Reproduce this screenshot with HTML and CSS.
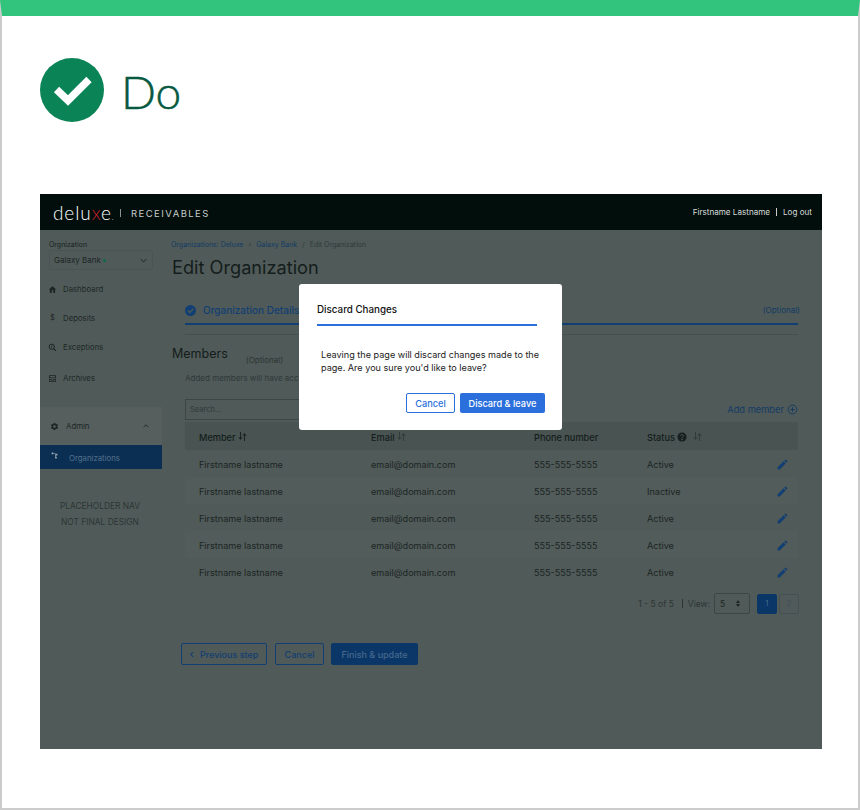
FILE: index.html
```html
<!DOCTYPE html>
<html lang="en">
<head>
<meta charset="utf-8">
<title>Do</title>
<link rel="stylesheet" href="styles.css">
</head>
<body>
<svg class="defs" aria-hidden="true">
  <symbol id="pen" viewBox="0 0 24 24"><path d="M3 17.250V21h3.750L17.800 9.940l-3.750-3.750zM20.700 7.040a1 1 0 000-1.410l-2.340-2.340a1 1 0 00-1.410 0l-1.830 1.830 3.750 3.750z"/></symbol>
  <symbol id="arrows" viewBox="0 0 9 9"><path d="M2.500 0v7M.8 5.200l1.700 2.200 1.700-2.200M6.500 9V2M4.800 3.800l1.700-2.200 1.700 2.200" fill="none" stroke="currentColor" stroke-width=".9"/></symbol>
</svg>
<div class="card">
  <div class="do-row">
    <svg class="do-icon" viewBox="0 0 64 64"><circle cx="32" cy="32" r="32" fill="#0a8457"/><path d="M16.500 31.500 L28 42.500 L49 21.500" fill="none" stroke="#fff" stroke-width="7.500"/></svg>
    <span class="do-text">Do</span>
  </div>
  <div class="app">
    <header class="topbar">
      <div class="brand"><span class="logo">delu<span class="logo-x">x</span>e<span class="logo-dot">.</span></span><span class="brand-sep"></span><span class="product">RECEIVABLES</span></div>
      <div class="user"><span>Firstname Lastname</span><span class="user-sep"></span><span>Log out</span></div>
    </header>
    <div class="body">
      <aside class="side">
        <div class="org">
          <div class="org-label">Orgnization</div>
          <div class="org-select"><span>Galaxy Bank <i class="dot"></i></span>
            <svg class="chev" viewBox="0 0 10 6"><path d="M1 1l4 4 4-4" fill="none" stroke="#1c2524" stroke-width="1.400"/></svg></div>
        </div>
        <nav class="nav">
          <a class="nav-item nav-dash"><svg class="nav-ico" viewBox="0 0 24 24"><path d="M10 21v-7h4v7h5v-9h3L12 3 2 12h3v9z"/></svg>Dashboard</a>
          <a class="nav-item nav-dep"><span class="nav-ico nav-dollar">$</span>Deposits</a>
          <a class="nav-item nav-exc"><svg class="nav-ico" viewBox="0 0 24 24"><circle cx="10" cy="10" r="7" fill="none" stroke="#1c2524" stroke-width="2.600"/><path d="M15 15l6 6" stroke="#1c2524" stroke-width="3"/><path d="M9 6h2v5H9zM9 12h2v2H9z"/></svg>Exceptions</a>
          <a class="nav-item nav-arc"><svg class="nav-ico" viewBox="0 0 24 24"><path d="M3 3h18v8H3zM5.500 5v4h13V5zM3 13h6l1 2h4l1-2h6v8H3zM5 15v4h14v-4h-2.500l-1 2h-7l-1-2z" fill-rule="evenodd"/></svg>Archives</a>
        </nav>
        <div class="admin">
          <svg class="nav-ico" viewBox="0 0 24 24"><path d="M19.140 12.940c.04-.3.06-.61.06-.94 0-.32-.02-.64-.07-.94l2.030-1.580c.18-.14.23-.41.12-.61l-1.920-3.320c-.12-.22-.37-.29-.59-.22l-2.390.96c-.5-.38-1.030-.7-1.620-.94l-.36-2.540c-.04-.24-.24-.41-.48-.41h-3.840c-.24 0-.43.17-.47.41l-.36 2.540c-.59.24-1.130.57-1.620.94l-2.390-.96c-.22-.08-.47 0-.59.22L2.740 8.870c-.12.21-.08.47.12.61l2.030 1.580c-.05.3-.09.63-.09.94s.02.64.07.94l-2.030 1.580c-.18.14-.23.41-.12.61l1.920 3.320c.12.22.37.29.59.22l2.390-.96c.5.38 1.030.7 1.620.94l.36 2.540c.05.24.24.41.48.41h3.840c.24 0 .44-.17.47-.41l.36-2.540c.59-.24 1.130-.56 1.620-.94l2.390.96c.22.08.47 0 .59-.22l1.920-3.320c.12-.22.07-.47-.12-.61l-2.010-1.580zM12 15.600c-1.980 0-3.600-1.620-3.600-3.600s1.620-3.600 3.600-3.600 3.600 1.620 3.600 3.600-1.620 3.600-3.600 3.600z"/></svg>
          <span class="admin-label">Admin</span>
          <svg class="chev-up" viewBox="0 0 10 6"><path d="M1 5l4-4 4 4" fill="none" stroke="#1c2524" stroke-width="1.400"/></svg>
        </div>
        <a class="sub-active"><svg class="sub-ico" viewBox="0 0 12 12"><path d="M1 1h3v3H1zM8 3h3v3H8zM7 8h3v3H7zM4 2h4v1H4zM7 4h1v5H7z"/></svg>Organizations</a>
        <div class="placeholder">PLACEHOLDER NAV<br>NOT FINAL DESIGN</div>
      </aside>
      <main class="main">
        <div class="crumbs"><span class="crumb-link">Organizations: Deluxe</span><span class="crumb-sep">›</span><span class="crumb-link">Galaxy Bank</span><span class="crumb-sep">/</span><span>Edit Organization</span></div>
        <h1 class="title">Edit Organization</h1>
        <div class="content">
          <div class="tabs">
            <svg class="tab-ico" viewBox="0 0 12 12"><circle cx="6" cy="6" r="6" fill="#123f73"/><path d="M3 6l2.200 2.200L9 4.200" fill="none" stroke="#505a58" stroke-width="1.400"/></svg>
            <span class="tab-name">Organization Details</span>
            <span class="tab-opt">(Optional)</span>
          </div>
          <div class="tab-rule"></div>
        </div>
        <div class="members-head"><h2 class="members">Members</h2><span class="opt">(Optional)</span></div>
        <div class="content">
          <p class="hint">Added members will have access to this organization.</p>
          <div class="tools">
            <div class="search">Search...</div>
            <a class="add">Add member <svg class="add-ico" viewBox="0 0 12 12"><circle cx="6" cy="6" r="4.800" fill="none" stroke="#123a66"/><path d="M3.500 6h5M6 3.500v5" stroke="#123a66"/></svg></a>
          </div>
          <div class="table">
            <div class="row thead">
              <span>Member <svg class="sort sort-dark"><use href="#arrows"/></svg></span><span>Email <svg class="sort"><use href="#arrows"/></svg></span><span>Phone number</span>
              <span>Status <svg class="help" viewBox="0 0 12 12"><circle cx="6" cy="6" r="5.500" fill="#17201f"/><path d="M4.300 4.800c0-2.200 3.500-2.200 3.500-.1 0 1.300-1.800 1.200-1.800 2.500M5.500 8.300h1v1h-1z" fill="none" stroke="#505a58"/></svg> <svg class="sort sort-status"><use href="#arrows"/></svg></span><span></span>
            </div>
            <div class="row"><span>Firstname lastname</span><span>email@domain.com</span><span>555-555-5555</span><span>Active</span><svg class="pencil"><use href="#pen"/></svg></div>
            <div class="row alt"><span>Firstname lastname</span><span>email@domain.com</span><span>555-555-5555</span><span>Inactive</span><svg class="pencil"><use href="#pen"/></svg></div>
            <div class="row"><span>Firstname lastname</span><span>email@domain.com</span><span>555-555-5555</span><span>Active</span><svg class="pencil"><use href="#pen"/></svg></div>
            <div class="row alt"><span>Firstname lastname</span><span>email@domain.com</span><span>555-555-5555</span><span>Active</span><svg class="pencil"><use href="#pen"/></svg></div>
            <div class="row"><span>Firstname lastname</span><span>email@domain.com</span><span>555-555-5555</span><span>Active</span><svg class="pencil"><use href="#pen"/></svg></div>
          </div>
          <div class="pager">
            <span>1 - 5 of 5</span><span class="pager-sep"></span><span>View:</span>
            <div class="view-select"><span>5</span><svg class="updown" viewBox="0 0 4 7"><path d="M2 0l2 3H0zM2 7L0 4h4z"/></svg></div>
            <span class="page page-on">1</span><span class="page">2</span>
          </div>
        </div>
        <div class="actions">
          <a class="btn btn-line btn-prev"><span class="lt">‹</span> Previous step</a>
          <a class="btn btn-line btn-cancel">Cancel</a>
          <a class="btn btn-fill">Finish &amp; update</a>
        </div>
      </main>
    </div>
    <div class="modal">
      <h3 class="modal-title">Discard Changes</h3>
      <p class="modal-text">Leaving the page will discard changes made to the page. Are you sure you'd like to leave?</p>
      <div class="modal-actions">
        <a class="mbtn mbtn-line">Cancel</a>
        <a class="mbtn mbtn-fill">Discard &amp; leave</a>
      </div>
    </div>
  </div>
</div>
</body>
</html>
```
FILE: styles.css
```css
* { box-sizing: border-box; }
html, body { margin: 0; padding: 0; }
body { width: 860px; height: 810px; background: #fff; font-family: "Inter", "Liberation Sans", sans-serif; overflow: hidden; }
.defs { display: none; }
.card { width: 860px; height: 810px; border: 2px solid #cccccc; border-top: 16px solid #32c47c; padding: 42px 38px 0; }
.do-row { display: flex; align-items: center; gap: 17px; height: 64px; }
.do-icon { width: 64px; height: 64px; flex: none; }
.do-text { font-family: "Lato", sans-serif; font-weight: 300; font-size: 46px; line-height: 64px; color: #06593f; -webkit-text-stroke: .5px #06593f; margin-top: 3px; }

.app { position: relative; width: 782px; height: 555px; margin-top: 72px; background: #505a58; display: flex; flex-direction: column; color: #1c2524; }
.topbar { height: 36px; background: #010e0c; display: flex; align-items: center; justify-content: space-between; padding: 0 10px 0 13px; color: #e4e7e6; flex: none; }
.brand { display: flex; align-items: center; }
.logo { font-family: "Lato", sans-serif; font-weight: 300; font-size: 19px; letter-spacing: .9px; color: #fff; width: 61px; }
.logo-x { color: #c8202c; }
.logo-dot { font-size: 8px; letter-spacing: 0; }
.brand-sep { width: 1px; height: 8px; background: #8a9190; margin: 1px 10px 0 6px; }
.product { font-size: 9.500px; letter-spacing: 1.450px; color: #c8cccb; font-weight: 400; position: relative; top: 1px; }
.user { display: flex; align-items: center; font-size: 8.100px; font-weight: 400; color: #d8dcdb; }
.user-sep { width: 1px; height: 8px; background: #c8cccb; margin: 0 6px; }

.body { flex: 1; display: flex; min-height: 0; }
.side { width: 122px; flex: none; display: flex; flex-direction: column; background: #505b59; font-size: 7.800px; color: #222c2b; }
.org { padding: 11px 9px 0 9px; }
.org-label { font-size: 7px; line-height: 8px; color: #17201f; }
.org-select { margin-top: 1px; height: 20px; border: 1px solid #4a5452; border-radius: 2px; display: flex; align-items: center; justify-content: space-between; padding: 0 5px 0 4px; font-size: 8px; color: #1c2524; }
.dot { display: inline-block; width: 3px; height: 3px; border-radius: 50%; background: #0a6b48; vertical-align: middle; }
.chev { width: 7px; height: 5px; }
.nav { display: flex; flex-direction: column; margin-top: 10px; }
.nav-item { display: flex; align-items: center; height: 18px; padding-left: 8px; color: #1e2827; }
.nav-dep, .nav-exc { margin-top: 11px; }
.nav-arc { margin-top: 13px; }
.nav-ico { width: 9px; height: 9px; margin-right: 6px; fill: #1c2524; flex: none; }
.nav-dollar { font-size: 7px; line-height: 8px; text-align: center; color: #1c2524; }
.admin { margin-top: 20px; height: 38px; background: #565f5d; display: flex; align-items: center; padding: 0 13px 0 10px; color: #1c2524; }
.admin .nav-ico { margin-right: 7px; }
.admin-label { flex: 1; }
.chev-up { width: 6px; height: 4px; }
.sub-active { height: 24px; background: #0b2f52; display: flex; align-items: center; padding: 2px 0 0 11px; color: #54708c; font-size: 7.800px; }
.sub-ico { width: 7px; height: 7px; margin-right: 11px; fill: #9aa8b4; position: relative; top: -3px; }
.placeholder { margin-top: 29px; padding-right: 2px; text-align: center; font-size: 8.400px; line-height: 16px; color: #2c3534; }

.main { flex: 1; display: flex; flex-direction: column; padding: 10px 24px 0 9px; background: #505a58; min-width: 0; }
.crumbs { font-size: 7px; line-height: 9px; color: #2f3a3a; display: flex; gap: 5px; }
.crumb-link { color: #123a66; }
.title { font-size: 18.200px; font-weight: 400; line-height: 24px; margin: 6px 0 0 1px; color: #141d1c; }
.content { margin-left: 14px; }
.tabs { margin-top: 23px; height: 23px; display: flex; align-items: center; border-bottom: 2px solid #123f73; padding: 0 0 5px 0; }
.tab-ico { width: 11px; height: 11px; margin-right: 7px; }
.tab-name { font-size: 10px; font-weight: 500; color: #123f73; flex: 1; }
.tab-opt { font-size: 8px; color: #123a66; margin-right: -2px; }
.tab-rule { height: 1px; background: #454f4d; margin-top: 9px; }
.members-head { display: flex; margin-top: 11px; height: 16px; position: relative; }
.members { font-size: 12.500px; font-weight: 400; margin: 0 0 0 1px; line-height: 16px; color: #141d1c; }
.opt { font-size: 8px; color: #2c3534; margin: 9px 0 0 18px; }
.hint { font-size: 8px; line-height: 12px; margin: 10px 0 0; color: #2f3938; }
.tools { margin-top: 15px; height: 21px; display: flex; justify-content: space-between; align-items: center; }
.search { width: 130px; height: 21px; border: 1px solid #3c4644; font-size: 7.500px; color: #2f3938; display: flex; align-items: center; padding-left: 4px; }
.add { font-size: 9.300px; color: #123a66; display: flex; align-items: center; gap: 3px; }
.add-ico { width: 11px; height: 11px; }
.table { margin-top: 2px; }
.row { height: 27px; display: grid; grid-template-columns: 172px 163px 113px 1fr 14px; align-items: center; padding: 1px 8px 0 14px; font-size: 9.100px; color: #1c2524; }
.row.alt { background: #525c5a; }
.thead { height: 28px; padding-top: 2px; background: #495351; font-weight: 500; font-size: 9.200px; color: #141d1c; }
.sort { width: 9px; height: 9px; color: #2f3938; vertical-align: 0; }
.sort-dark { color: #141d1c; }
.sort-status { margin-left: 3px; }
.help { width: 10px; height: 10px; vertical-align: -1px; }
.pencil { width: 13px; height: 13px; fill: #123f73; }
.pager { display: flex; align-items: center; justify-content: flex-end; font-size: 8.500px; color: #2c3534; margin: 8px -1px 0 0; height: 21px; }
.pager-sep { width: 1px; height: 9px; background: #2c3534; margin: 0 5px 0 8px; }
.view-select { width: 36px; height: 21px; margin-left: 4px; border: 1px solid #3c4644; border-radius: 2px; display: flex; justify-content: space-between; align-items: center; padding: 0 9px 0 5px; color: #1c2524; }
.updown { width: 4px; height: 7px; fill: #1c2524; }
.page { width: 20px; height: 20px; margin-left: 2px; border: 1px solid #465050; border-radius: 2px; display: flex; align-items: center; justify-content: center; font-size: 7px; color: #3c4e5e; }
.page-on { margin-left: 7px; background: #0b3768; border-color: #0b3768; color: #4f7090; }
.actions { display: flex; gap: 8px; margin-top: 29px; margin-left: 10px; }
.btn { height: 22px; display: flex; align-items: center; justify-content: center; border-radius: 2px; font-size: 9px; font-weight: 500; }
.btn-prev { width: 86px; }
.btn-cancel { width: 49px; }
.btn-line { border: 1px solid #123f73; color: #123f73; }
.btn-fill { width: 87px; margin-left: -1px; background: #0b3768; color: #45688c; }
.lt { margin-right: 6px; font-size: 11px; line-height: 10px; }

.modal { position: absolute; left: 259px; top: 90px; width: 263px; height: 146px; background: #fff; border-radius: 3px; padding: 18px 17px 0 18px; color: #1a1a1a; }
.modal-title { font-size: 9.800px; font-weight: 500; line-height: 16px; margin: 0; width: 220px; height: 24px; border-bottom: 2px solid #2a6fdb; color: #111; }
.modal-text { font-size: 9.100px; line-height: 13px; margin: 22px 0 0 4px; width: 226px; color: #222; }
.modal-actions { display: flex; justify-content: flex-end; gap: 5px; margin: 19px 0 0; }
.mbtn { height: 20px; display: flex; align-items: center; justify-content: center; border-radius: 2px; font-size: 9.200px; font-weight: 500; }
.mbtn-line { width: 49px; border: 1px solid #2a6fdb; color: #2a6fdb; }
.mbtn-fill { width: 85px; background: #2a6fdb; color: #fff; }
```
